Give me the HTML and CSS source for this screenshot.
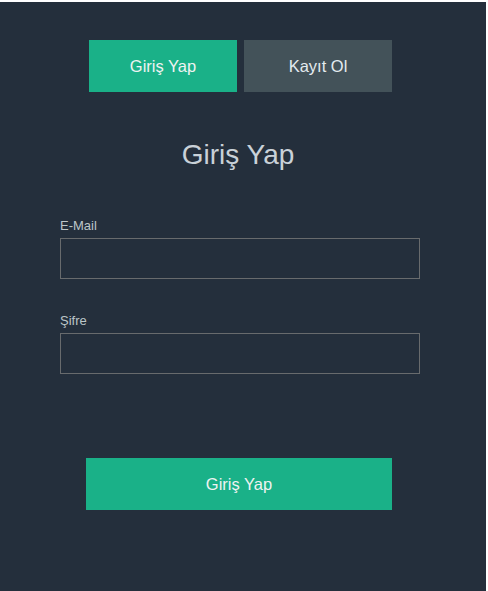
FILE: index.html
```html
<!DOCTYPE html>
<html lang="tr">
<head>
<meta charset="utf-8">
<title>Giriş Yap</title>
<link rel="stylesheet" href="styles.css">
</head>
<body>
<div class="page">
  <div class="tabs">
    <div class="tab tab-active">Giriş Yap</div>
    <div class="tab tab-inactive">Kayıt Ol</div>
  </div>
  <h1 class="title">Giriş Yap</h1>
  <form class="form">
    <label class="label" for="email">E-Mail</label>
    <input class="field" id="email" type="email">
    <label class="label label-second" for="pass">Şifre</label>
    <input class="field" id="pass" type="password">
    <button class="submit" type="button">Giriş Yap</button>
  </form>
</div>
</body>
</html>
```

FILE: styles.css
```css
html, body {
  margin: 0;
  padding: 0;
  background: #ffffff;
}
body {
  font-family: "Liberation Sans", Arial, sans-serif;
}
.page {
  box-sizing: border-box;
  margin-top: 2px;
  margin-right: 2px;
  height: 589px;
  background: #242f3c;
  padding-top: 38px;
  padding-left: 60px;
}
.tabs {
  display: flex;
  gap: 7px;
  margin-left: 29px;
}
.tab {
  width: 148px;
  height: 52px;
  display: flex;
  align-items: center;
  justify-content: center;
  font-size: 16.5px;
  color: #eef3f2;
}
.tab-active {
  background: #1ab188;
}
.tab-inactive {
  background: #435259;
  color: #e4ebef;
}
.title {
  margin: 47px 0 0 -2px;
  width: 360px;
  text-align: center;
  font-size: 28px;
  line-height: 32px;
  font-weight: normal;
  color: #c9d1d8;
}
.form {
  display: flex;
  flex-direction: column;
  width: 360px;
  margin-top: 47px;
}
.label {
  font-size: 13px;
  line-height: 16px;
  color: #bcc6c8;
  margin-bottom: 4px;
}
.label-second {
  margin-top: 34px;
}
.field {
  box-sizing: border-box;
  width: 360px;
  height: 41px;
  margin: 0;
  border: 1px solid #686b6d;
  background: transparent;
  outline: none;
}
.submit {
  margin: 84px 0 0 26px;
  width: 306px;
  height: 52px;
  border: none;
  background: #1ab188;
  color: #eef3f2;
  font-family: "Liberation Sans", Arial, sans-serif;
  font-size: 16.5px;
  padding: 0;
}
```
